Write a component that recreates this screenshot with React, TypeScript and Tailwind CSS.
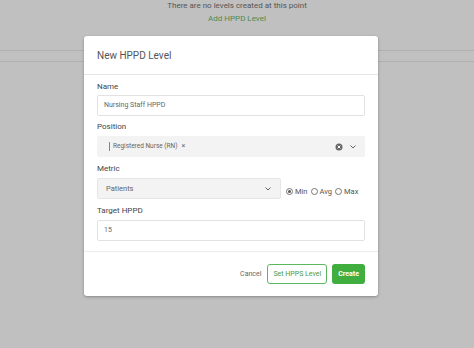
import React from 'react';

const font = { fontFamily: 'Roboto, "Liberation Sans", sans-serif' };

export default function App() {
    return (
        <div className="relative w-[474px] h-[348px] bg-[#c0c0c0] overflow-hidden" style={font}>
            {/* Background page (dimmed) */}
            <div className="flex flex-col items-center pt-px">
                <div className="text-[8px] leading-[10px] text-[#555]">There are no levels created at this point</div>
                <div className="text-[8px] leading-[10px] mt-[3px] text-[#4e8a4e]">Add HPPD Level</div>
            </div>
            <div className="mt-[26px] border-t border-[#b0b0b0] h-[11px]"></div>
            <div className="border-t border-[#b0b0b0]"></div>

            {/* Modal */}
            <div className="absolute left-[84px] top-[36px] w-[294px] bg-white rounded-[3px] shadow-[0_1px_3px_rgba(0,0,0,0.3)]">
                <div className="h-[39px] flex items-center px-[13px] border-b border-[#e6e6e6]">
                    <span className="text-[10px] text-[#555]">New HPPD Level</span>
                </div>

                <div className="px-[13px] pt-[7px] pb-[10px] flex flex-col">
                    <label className="text-[8px] text-[#444] leading-[10px]">Name</label>
                    <div className="mt-[3px] h-[21px] border border-[#e2e2e2] rounded-[2px] flex items-center px-[6px] text-[7px] text-[#666]">
                        Nursing Staff HPPD
                    </div>

                    <label className="mt-[6px] text-[8px] text-[#444] leading-[10px]">Position</label>
                    <div className="mt-[4px] h-[21px] bg-[#f3f3f3] rounded-[2px] flex items-center pl-[12px] pr-[8px]">
                        <span className="border-l border-[#4caf50] pl-[3px] text-[6.5px] text-[#666] leading-[9px]">Registered Nurse (RN)</span>
                        <span className="ml-[4px] text-[7px] text-[#666]">×</span>
                        <div className="flex-1"></div>
                        <svg width="8" height="8" viewBox="0 0 8 8">
                            <circle cx="4" cy="4" r="3.5" fill="#666" />
                            <path d="M2.6 2.6 L5.4 5.4 M5.4 2.6 L2.6 5.4" stroke="#fff" strokeWidth="1" />
                        </svg>
                        <svg className="ml-[6px]" width="8" height="6" viewBox="0 0 8 6">
                            <path d="M1.5 1.5 L4 4 L6.5 1.5" stroke="#666" strokeWidth="1" fill="none" />
                        </svg>
                    </div>

                    <label className="mt-[7px] text-[8px] text-[#444] leading-[10px]">Metric</label>
                    <div className="mt-[4px] flex items-end">
                        <div className="w-[184px] h-[21px] bg-[#f3f3f3] border border-[#e6e6e6] rounded-[2px] flex items-center px-[8px]">
                            <span className="text-[7.5px] text-[#666]">Patients</span>
                            <div className="flex-1"></div>
                            <svg width="8" height="6" viewBox="0 0 8 6">
                                <path d="M1.5 1.5 L4 4 L6.5 1.5" stroke="#666" strokeWidth="1" fill="none" />
                            </svg>
                        </div>
                        <div className="ml-[5px] mb-[2px] flex items-center gap-[3px] text-[7.5px] text-[#555]">
                            <span className="flex items-center gap-[2px]">
                                <span className="w-[7px] h-[7px] rounded-full border border-[#777] flex items-center justify-center">
                                    <span className="w-[3px] h-[3px] rounded-full bg-[#555]"></span>
                                </span>
                                Min
                            </span>
                            <span className="flex items-center gap-[2px]">
                                <span className="w-[7px] h-[7px] rounded-full border border-[#777]"></span>
                                Avg
                            </span>
                            <span className="flex items-center gap-[2px]">
                                <span className="w-[7px] h-[7px] rounded-full border border-[#777]"></span>
                                Max
                            </span>
                        </div>
                    </div>

                    <label className="mt-[7px] text-[8px] text-[#444] leading-[10px]">Target HPPD</label>
                    <div className="mt-[4px] h-[21px] border border-[#e2e2e2] rounded-[2px] flex items-center px-[6px] text-[7px] text-[#666]">
                        15
                    </div>
                </div>

                <div className="border-t border-[#ececec] h-[45px] flex items-center justify-end gap-[5px] px-[13px]">
                    <span className="text-[7px] text-[#666] mr-[1px]">Cancel</span>
                    <div className="h-[20px] px-[5px] border border-[#5cb85c] rounded-[3px] flex items-center text-[7px] text-[#4a9a4a]">
                        Set HPPS Level
                    </div>
                    <div className="h-[20px] px-[6px] bg-[#3fae3f] rounded-[3px] flex items-center text-[7px] font-bold text-white">
                        Create
                    </div>
                </div>
            </div>
        </div>
    );
}
